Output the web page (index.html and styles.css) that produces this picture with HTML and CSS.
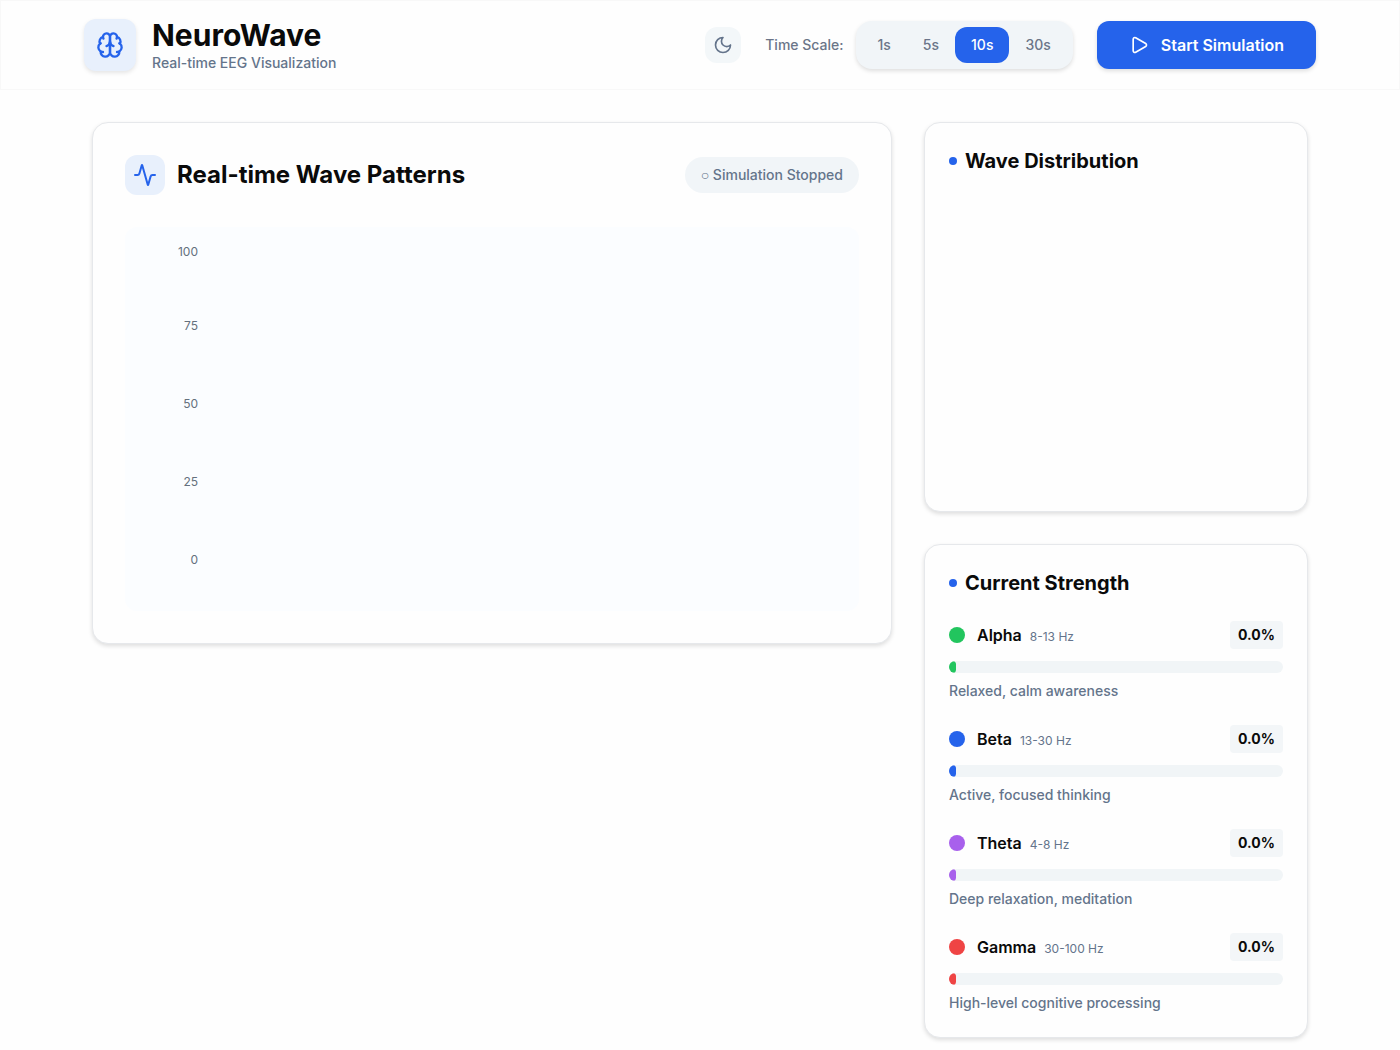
FILE: index.html
```html
<!DOCTYPE html>
<html lang="en">

<head>
    <meta charset="UTF-8">
    <meta name="viewport" content="width=device-width, initial-scale=1.0">
    <title>NeuroWave</title>
    <link rel="stylesheet" href="styles.css">
</head>

<body>
    <header class="header">
        <div class="header_inner">
            <div class="brand">
                <div class="brand_icon">
                    <svg class="icon icon_lg" viewBox="0 0 24 24">
                        <path d="M12 5a3 3 0 1 0-5.997.125 4 4 0 0 0-2.526 5.77 4 4 0 0 0 .556 6.588A4 4 0 1 0 12 18Z" />
                        <path d="M12 5a3 3 0 1 1 5.997.125 4 4 0 0 1 2.526 5.77 4 4 0 0 1-.556 6.588A4 4 0 1 1 12 18Z" />
                        <path d="M15 13a4.5 4.5 0 0 1-3-4 4.5 4.5 0 0 1-3 4" />
                        <path d="M17.599 6.5a3 3 0 0 0 .399-1.375" />
                        <path d="M6.003 5.125A3 3 0 0 0 6.401 6.5" />
                        <path d="M3.477 10.896a4 4 0 0 1 .585-.396" />
                        <path d="M19.938 10.5a4 4 0 0 1 .585.396" />
                        <path d="M6 18a4 4 0 0 1-1.967-.516" />
                        <path d="M19.967 17.484A4 4 0 0 1 18 18" />
                    </svg>
                </div>
                <div>
                    <h1 class="brand_name">NeuroWave</h1>
                    <p class="brand_text">Real-time EEG Visualization</p>
                </div>
            </div>

            <div class="controls">
                <button type="button" class="theme_btn" aria-label="Toggle theme">
                    <svg class="icon" viewBox="0 0 24 24">
                        <path d="M12 3a6 6 0 0 0 9 9 9 9 0 1 1-9-9Z" />
                    </svg>
                </button>
                <div class="scale">
                    <span id="scale_label" class="scale_label">Time Scale:</span>
                    <div class="scale_group" role="group" aria-labelledby="scale_label">
                        <button type="button" class="scale_btn">1s</button>
                        <button type="button" class="scale_btn">5s</button>
                        <button type="button" class="scale_btn active">10s</button>
                        <button type="button" class="scale_btn">30s</button>
                    </div>
                </div>
                <button type="button" class="start_btn">
                    <svg class="icon" viewBox="0 0 24 24">
                        <path d="M5 5a2 2 0 0 1 3.008-1.728l11.997 6.998a2 2 0 0 1 .003 3.458l-12 7A2 2 0 0 1 5 19z" />
                    </svg>
                    Start Simulation
                </button>
            </div>
        </div>
    </header>

    <main class="main">
        <section class="card card_wave">
            <div class="wave_head">
                <div class="wave_title">
                    <div class="wave_icon">
                        <svg class="icon icon_md" viewBox="0 0 24 24">
                            <path d="M22 12h-2.48a2 2 0 0 0-1.93 1.46l-2.35 8.36a.25.25 0 0 1-.48 0L9.24 2.18a.25.25 0 0 0-.48 0l-2.35 8.36A2 2 0 0 1 4.49 12H2" />
                        </svg>
                    </div>
                    <h2>Real-time Wave Patterns</h2>
                </div>
                <span class="status"><span class="status_mark">○</span> Simulation Stopped</span>
            </div>
            <div class="chart">
                <svg class="chart_svg">
                    <text x="73" y="29">100</text>
                    <text x="73" y="103">75</text>
                    <text x="73" y="181">50</text>
                    <text x="73" y="259">25</text>
                    <text x="73" y="337">0</text>
                </svg>
            </div>
        </section>

        <div class="side">
            <section class="card">
                <h3 class="card_title">Wave Distribution</h3>
                <div class="pie"></div>
            </section>

            <section class="card">
                <h3 class="card_title">Current Strength</h3>
                <ul class="waves">
                    <li class="alpha">
                        <div class="wave_row">
                            <span class="dot"></span>
                            <div class="wave_label"><b>Alpha</b> <small>8-13 Hz</small></div>
                            <span class="value">0.0%</span>
                        </div>
                        <div class="bar"><div class="bar_fill" style="width: 2%"></div></div>
                        <p>Relaxed, calm awareness</p>
                    </li>
                    <li class="beta">
                        <div class="wave_row">
                            <span class="dot"></span>
                            <div class="wave_label"><b>Beta</b> <small>13-30 Hz</small></div>
                            <span class="value">0.0%</span>
                        </div>
                        <div class="bar"><div class="bar_fill" style="width: 2%"></div></div>
                        <p>Active, focused thinking</p>
                    </li>
                    <li class="theta">
                        <div class="wave_row">
                            <span class="dot"></span>
                            <div class="wave_label"><b>Theta</b> <small>4-8 Hz</small></div>
                            <span class="value">0.0%</span>
                        </div>
                        <div class="bar"><div class="bar_fill" style="width: 2%"></div></div>
                        <p>Deep relaxation, meditation</p>
                    </li>
                    <li class="gamma">
                        <div class="wave_row">
                            <span class="dot"></span>
                            <div class="wave_label"><b>Gamma</b> <small>30-100 Hz</small></div>
                            <span class="value">0.0%</span>
                        </div>
                        <div class="bar"><div class="bar_fill" style="width: 2%"></div></div>
                        <p>High-level cognitive processing</p>
                    </li>
                </ul>
            </section>
        </div>
    </main>
</body>

</html>
```

FILE: styles.css
```css
* {
    margin: 0;
    padding: 0;
    box-sizing: border-box;
}

body {
    font-family: Inter, "Liberation Sans", sans-serif;
    font-size: 14px;
    line-height: 20px;
    color: #0a0a0a;
    background-color: #fefefe;
}

button {
    border: none;
    font-family: inherit;
    cursor: pointer;
}

/* icons */

.icon {
    width: 20px;
    height: 20px;
    flex-shrink: 0;
    fill: none;
    stroke: currentColor;
    stroke-width: 2;
    stroke-linecap: round;
    stroke-linejoin: round;
}

.icon_md {
    width: 24px;
    height: 24px;
}

.icon_lg {
    width: 28px;
    height: 28px;
}

/* header */

.header {
    border: 1px solid #f8f8f8;
}

.header_inner {
    max-width: 1280px;
    margin: 0 auto;
    padding: 16px 24px;
    display: flex;
    justify-content: space-between;
    align-items: center;
}

.brand {
    display: flex;
    align-items: center;
    gap: 16px;
}

.brand_icon {
    padding: 12px;
    border-radius: 12px;
    color: #2563eb;
    background-color: #e8f0fc;
    box-shadow: 0 2px 4px rgba(0, 0, 0, 0.1);
}

.brand_icon svg,
.wave_icon svg {
    display: block;
}

.brand_name {
    font-size: 30px;
    line-height: 36px;
    font-weight: 700;
}

.brand_text {
    font-weight: 500;
    color: #64748b;
}

.controls {
    display: flex;
    align-items: center;
    gap: 24px;
}

.theme_btn {
    display: flex;
    padding: 8px;
    border-radius: 12px;
    color: #64748b;
    background-color: #f3f7f9;
}

.scale {
    display: flex;
    align-items: center;
    gap: 12px;
}

.scale_label {
    font-weight: 500;
    color: #6b7588;
}

.scale_group {
    display: flex;
    padding: 6px;
    border-radius: 16px;
    background-color: #f1f5f8;
    box-shadow: 0 2px 4px rgba(0, 0, 0, 0.13);
}

.scale_btn {
    padding: 8px 16px;
    border-radius: 12px;
    font-size: 14px;
    line-height: 20px;
    font-weight: 500;
    color: #6b7588;
    background-color: transparent;
}

.scale_btn.active {
    color: white;
    background-color: #2563eb;
}

.start_btn {
    display: flex;
    align-items: center;
    gap: 12px;
    padding: 12px 32px;
    border-radius: 12px;
    font-size: 16px;
    line-height: 24px;
    font-weight: 600;
    color: white;
    background-color: #2563eb;
    box-shadow: 0 2px 4px rgba(0, 0, 0, 0.13);
}

/* layout */

.main {
    max-width: 1280px;
    margin: 0 auto;
    padding: 32px;
    display: grid;
    grid-template-columns: repeat(3, 1fr);
    gap: 32px;
    align-items: start;
}

.side {
    display: grid;
    gap: 32px;
}

.card {
    padding: 24px;
    border: 1px solid #e6e8eb;
    border-radius: 16px;
    background-color: #fefefe;
    box-shadow: 0 2px 4px rgba(0, 0, 0, 0.13);
}

/* wave chart */

.card_wave {
    grid-column: span 2;
    padding: 32px;
}

.wave_head {
    display: flex;
    justify-content: space-between;
    align-items: center;
    margin-bottom: 32px;
}

.wave_title {
    display: flex;
    align-items: center;
    gap: 12px;
}

.wave_title h2 {
    font-size: 24px;
    line-height: 32px;
    font-weight: 700;
}

.wave_icon {
    padding: 8px;
    border-radius: 12px;
    color: #2563eb;
    background-color: #e8f0fc;
}

.status {
    padding: 8px 16px;
    border-radius: 18px;
    font-weight: 500;
    color: #64748b;
    background-color: #f1f5f8;
}

.status_mark {
    font-family: "Liberation Sans", sans-serif;
}

.chart {
    height: 384px;
    border-radius: 12px;
    background-color: #fbfdff;
}

.chart_svg {
    display: block;
    width: 100%;
    height: 100%;
}

.chart_svg text {
    font-size: 12px;
    text-anchor: end;
    fill: #64707d;
}

/* side cards */

.card_title {
    display: flex;
    align-items: center;
    gap: 8px;
    margin-bottom: 24px;
    font-size: 20px;
    line-height: 28px;
    font-weight: 700;
}

.card_title::before {
    content: "";
    width: 8px;
    height: 8px;
    border-radius: 50%;
    background-color: #2563eb;
}

.pie {
    height: 288px;
}

.waves {
    display: grid;
    gap: 24px;
    list-style: none;
}

.wave_row {
    display: flex;
    align-items: center;
    gap: 12px;
    margin-bottom: 12px;
}

.dot {
    width: 16px;
    height: 16px;
    border-radius: 50%;
}

.wave_label {
    display: flex;
    align-items: baseline;
    gap: 8px;
    flex: 1;
}

.wave_label b {
    font-size: 16px;
    line-height: 24px;
    font-weight: 600;
}

.wave_label small {
    font-size: 12px;
    color: #64748b;
}

.value {
    padding: 4px 8px;
    border-radius: 4px;
    font-weight: 700;
    background-color: #f3f6f8;
}

.bar {
    height: 12px;
    margin-bottom: 8px;
    border-radius: 6px;
    background-color: #f1f5f7;
    overflow: hidden;
}

.bar_fill {
    height: 100%;
    border-radius: 6px;
}

.waves p {
    font-weight: 500;
    color: #64748b;
}

.alpha .dot,
.alpha .bar_fill {
    background-color: #22c55e;
}

.beta .dot,
.beta .bar_fill {
    background-color: #2563eb;
}

.theta .dot,
.theta .bar_fill {
    background-color: #a860ec;
}

.gamma .dot,
.gamma .bar_fill {
    background-color: #ef4444;
}
```
